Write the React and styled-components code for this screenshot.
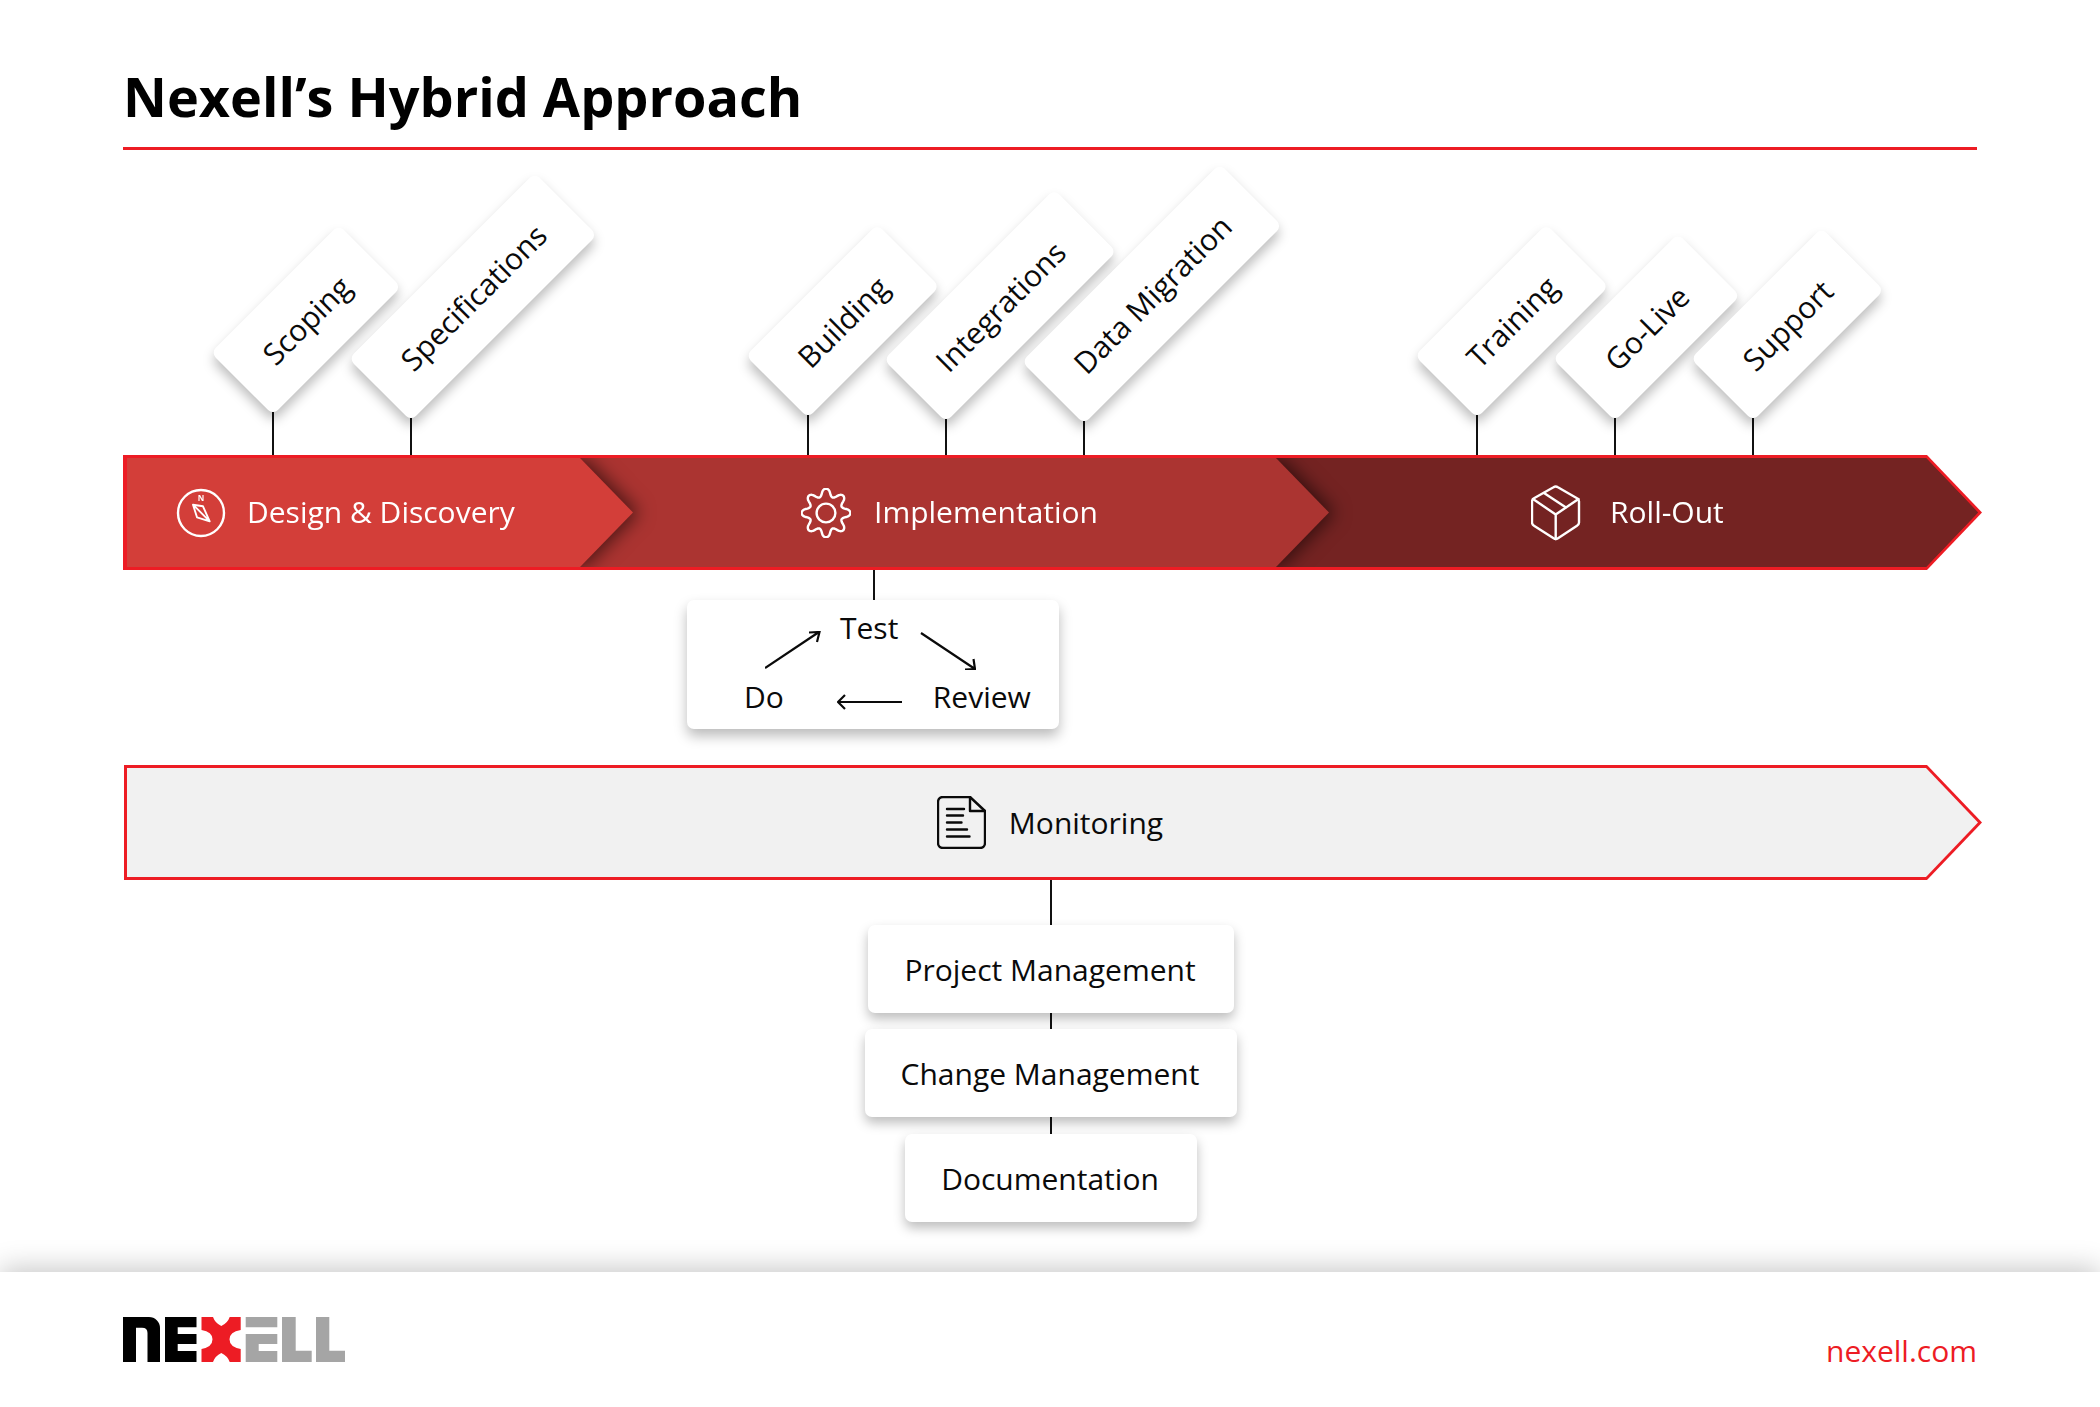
import React from 'react';
import styled, { createGlobalStyle } from 'styled-components';

const GlobalStyle = createGlobalStyle`
  html, body {
    margin: 0;
    padding: 0;
    background: #fff;
  }
  body {
    font-family: "Open Sans", "Liberation Sans", sans-serif;
    color: #0a0a0a;
  }
`;

const Page = styled.div`
  display: flex;
  flex-direction: column;
  width: 2100px;
  height: 1407px;
  overflow: hidden;
`;

const Main = styled.main`
  flex: 1;
  display: flex;
  flex-direction: column;
  padding: 59px 123px 0;
  min-height: 0;
`;

const Title = styled.h1`
  margin: 0;
  font-size: 54px;
  line-height: 74px;
  font-weight: 700;
  color: #000;
  padding-bottom: 14px;
  border-bottom: 3px solid #ed1c24;
`;

const TagRail = styled.div`
  display: flex;
  align-items: flex-end;
  height: 305px;
  padding-left: 149px;
`;

const TagGroup = styled.div`
  display: flex;
  align-items: flex-end;
  gap: 136px;
  margin-left: ${p => p.$offset || 0}px;
`;

const TagStem = styled.div`
  position: relative;
  width: 2px;
  height: ${p => p.$height}px;
  background: #111;
`;

const TagCard = styled.div`
  position: absolute;
  left: 1px;
  bottom: calc(100% - 3px);
  display: flex;
  align-items: center;
  height: 88px;
  padding: 0 36px;
  background: #fff;
  border-radius: 7px;
  font-size: 30px;
  white-space: nowrap;
  transform-origin: 0 100%;
  transform: rotate(-45deg);
  box-shadow: -5px 5px 12px rgba(0, 0, 0, 0.26);
`;

const RibbonOuter = styled.div`
  height: 115px;
  margin: 0 -5px 0 ${p => p.$inset || 0}px;
  padding: 3px 3px 3px ${p => (p.$inset ? 3 : 4)}px;
  box-sizing: border-box;
  background: #ed1c24;
  clip-path: polygon(0 0, calc(100% - 55px) 0, 100% 50%, calc(100% - 55px) 100%, 0 100%);
`;

const RibbonInner = styled.div`
  display: flex;
  height: 100%;
  background: ${p => p.$bg || '#741f1f'};
  clip-path: polygon(0 0, calc(100% - 53px) 0, calc(100% - 1px) 50%, calc(100% - 53px) 100%, 0 100%);
`;

const Segment = styled.div`
  position: relative;
  z-index: ${p => p.$z};
  flex: ${p => (p.$width ? `0 0 ${p.$width}px` : '1')};
  margin-left: ${p => p.$overlap || 0}px;
  filter: drop-shadow(6px 0 9px rgba(0, 0, 0, 0.55));
`;

const SegmentFill = styled.div`
  display: flex;
  align-items: center;
  gap: ${p => p.$gap}px;
  height: 100%;
  padding-left: ${p => p.$pad}px;
  background: ${p => p.$color};
  color: #fff;
  font-size: 30px;
  clip-path: ${p =>
    p.$last
      ? 'none'
      : 'polygon(0 0, calc(100% - 53px) 0, 100% 50%, calc(100% - 53px) 100%, 0 100%)'};
`;

const SegmentLabel = styled.span`
  position: relative;
  top: -1px;
  white-space: nowrap;
`;

const ProcessColumn = styled.div`
  display: flex;
  flex-direction: column;
  align-items: center;
  width: 372px;
  margin-left: 564px;
`;

const VStem = styled.div`
  width: 2px;
  height: ${p => p.$height}px;
  margin-left: ${p => p.$shift || 0}px;
  background: #111;
`;

const ProcessCard = styled.div`
  box-sizing: border-box;
  width: 372px;
  height: 129px;
  padding-top: 8px;
  background: #fff;
  border-radius: 7px;
  font-size: 30px;
  line-height: 40px;
  box-shadow: 0 7px 13px rgba(0, 0, 0, 0.27);
`;

const ProcessRow = styled.div`
  display: flex;
  align-items: flex-start;
  height: ${p => p.$height}px;
  padding-left: ${p => p.$pad}px;
`;

const ProcessWord = styled.span`
  margin-left: ${p => p.$left || 0}px;
`;

const ArrowIcon = styled.svg`
  flex: none;
  margin-left: ${p => p.$left || 0}px;
  margin-top: ${p => p.$top || 0}px;
  fill: none;
  stroke: #0a0a0a;
  stroke-width: 2.2;
`;

const MonitoringContent = styled.div`
  display: flex;
  align-items: center;
  justify-content: center;
  gap: 23px;
  flex: 1;
  padding-right: 6px;
  font-size: 30px;
  background: #f1f1f1;
`;

const MonitoringSpacer = styled.div`
  height: 36px;
`;

const Stack = styled.div`
  display: flex;
  flex-direction: column;
  align-items: center;
  padding-left: 2px;
`;

const StackCard = styled.div`
  position: relative;
  display: flex;
  align-items: center;
  height: 88px;
  padding: 0 38px 0 36px;
  background: #fff;
  border-radius: 7px;
  font-size: 30px;
  white-space: nowrap;
  box-shadow: 0 6px 12px rgba(0, 0, 0, 0.26);
`;

const Footer = styled.footer`
  position: relative;
  display: flex;
  justify-content: space-between;
  align-items: flex-start;
  flex: none;
  height: 135px;
  padding: 45px 123px 0;
  box-sizing: border-box;
  background: #fff;
  box-shadow: 0 -4px 26px rgba(0, 0, 0, 0.22);
`;

const SiteLink = styled.span`
  margin-top: 14px;
  font-size: 30px;
  line-height: 40px;
  color: #ed1c24;
`;

const LineIcon = styled.svg`
  display: block;
  flex: none;
  fill: none;
  stroke: ${p => p.$stroke || '#fff'};
  stroke-width: ${p => p.$weight || 2.4}px;
  stroke-linejoin: round;
  stroke-linecap: round;
`;

const gearPath = () => {
  const points = [];
  for (let i = 0; i < 160; i++) {
    const a = (i / 160) * Math.PI * 2 - Math.PI / 2;
    const wave = Math.cos(8 * (a + Math.PI / 2));
    const r = 20.6 + 3.8 * Math.sign(wave) * Math.pow(Math.abs(wave), 0.75);
    points.push(`${(25 + r * Math.cos(a)).toFixed(2)} ${(25 + r * Math.sin(a)).toFixed(2)}`);
  }
  return `M${points.join('L')}Z`;
};

const CompassIcon = () => (
  <LineIcon width="50" height="50" viewBox="-1 -1 50 50">
    <circle cx="24" cy="24" r="23" />
    <path d="M16 15.7 26 17.3 32.7 32.3 20 28.3Z M16 15.7 32.7 32.3" strokeWidth="1.9" />
    <text x="24" y="11.5" textAnchor="middle" fontSize="8" fontWeight="700" fill="#fff" stroke="none">N</text>
  </LineIcon>
);

const GearIcon = () => (
  <LineIcon width="50" height="50" viewBox="0 0 50 50">
    <path d={gearPath()} />
    <circle cx="25" cy="25" r="9.4" />
  </LineIcon>
);

const BoxIcon = () => (
  <LineIcon width="50" height="56" viewBox="-1 -1 50 56">
    <path d="M21.5 1.2a4 4 0 0 1 4.4 0L45 12.2a4 4 0 0 1 2 3.2V36.6a4 4 0 0 1-2 3.2L26 52.2a4 4 0 0 1-4.4 0L2 39.8a4 4 0 0 1-2-3.2V15.4a4 4 0 0 1 2-3.2Z" />
    <path d="M1 13 23.7 28.5 46.5 13M23.7 28.5V53M12 7 34 21.5" />
  </LineIcon>
);

const DocIcon = () => (
  <LineIcon width="49" height="53" viewBox="-1 -1 49 53" $stroke="#0a0a0a" $weight={2.4}>
    <path d="M5 0H32L47 14V46a5 5 0 0 1-5 5H5a5 5 0 0 1-5-5V5a5 5 0 0 1 5-5Z" />
    <path d="M32 0V14H47" />
    <path d="M9 12H26M9 18.500H25M9 25.500H23.500M9 32.500H29M9 39.500H31.500" />
  </LineIcon>
);

const NexellLogo = () => (
  <svg width="223" height="45" viewBox="0 0 223 45" style={{ display: 'block', flex: 'none' }}>
    <path
      fill="#000"
      d="M0 0H26A11 11 0 0 1 37 11V45H24.500V16Q24.500 10.700 19 10.700H13V45H0Z"
    />
    <path
      fill="#000"
      d="M42 0H73.500V10.300H54.700V17H73.500V27H54.700V34H73.500V45H42Z"
    />
    <path
      fill="#ed1c24"
      d="M78.500 0H90Q92 6 98.300 9Q104.700 6 106.700 0H117.700V13Q106.500 15 106.500 22.300Q106.500 30 117.700 32V45H106.700Q104.700 39 98.300 36Q92 39 90 45H78.500V32Q89.500 30 89.500 22.300Q89.500 15 78.500 13Z"
    />
    <path
      fill="#a5a5a5"
      d="M122.700 0H154.300V10.300H122.700ZM122.700 17H154.300V27H135.700V34H154.300V45H122.700Z"
    />
    <path fill="#a5a5a5" d="M159 0H172.700V33.700H188.700V45H159Z" />
    <path fill="#a5a5a5" d="M193 0H206.300V33.700H222V45H193Z" />
  </svg>
);

const tagGroups = [
  {
    offset: 0,
    tags: [
      { label: 'Scoping', stem: 43 },
      { label: 'Specifications', stem: 37 },
    ],
  },
  {
    offset: 395,
    tags: [
      { label: 'Building', stem: 40 },
      { label: 'Integrations', stem: 36 },
      { label: 'Data Migration', stem: 34 },
    ],
  },
  {
    offset: 391,
    tags: [
      { label: 'Training', stem: 40 },
      { label: 'Go-Live', stem: 37 },
      { label: 'Support', stem: 37 },
    ],
  },
];

const stackItems = [
  { label: 'Project Management', stem: 45 },
  { label: 'Change Management', stem: 16 },
  { label: 'Documentation', stem: 17 },
];

const App = () => (
  <Page>
    <GlobalStyle />
    <Main>
      <Title>Nexell’s Hybrid Approach</Title>

      <TagRail>
        {tagGroups.map(group => (
          <TagGroup key={group.tags[0].label} $offset={group.offset}>
            {group.tags.map(tag => (
              <TagStem key={tag.label} $height={tag.stem}>
                <TagCard>{tag.label}</TagCard>
              </TagStem>
            ))}
          </TagGroup>
        ))}
      </TagRail>

      <RibbonOuter>
        <RibbonInner>
          <Segment $z={3} $width={506}>
            <SegmentFill $color="#d33e39" $pad={49} $gap={21}>
              <CompassIcon />
              <SegmentLabel>Design &amp; Discovery</SegmentLabel>
            </SegmentFill>
          </Segment>
          <Segment $z={2} $width={749} $overlap={-53}>
            <SegmentFill $color="#ab3431" $pad={221} $gap={23}>
              <GearIcon />
              <SegmentLabel>Implementation</SegmentLabel>
            </SegmentFill>
          </Segment>
          <Segment $z={1} $overlap={-52}>
            <SegmentFill $color="#742322" $pad={254} $gap={29} $last>
              <BoxIcon />
              <SegmentLabel>Roll-Out</SegmentLabel>
            </SegmentFill>
          </Segment>
        </RibbonInner>
      </RibbonOuter>

      <ProcessColumn>
        <VStem $height={30} $shift={2} />
        <ProcessCard>
          <ProcessRow $height={69} $pad={78}>
            <ArrowIcon width="56" height="38" viewBox="0 0 56 38" $top={23}>
              <path d="M0 37 54 1M44 1.500 54.500 1 52 11" />
            </ArrowIcon>
            <ProcessWord $left={19}>Test</ProcessWord>
            <ArrowIcon width="56" height="38" viewBox="0 0 56 38" $left={22} $top={24}>
              <path d="M1 1 55 37M53.500 27 55 37 45 37.500" />
            </ArrowIcon>
          </ProcessRow>
          <ProcessRow $height={40} $pad={57}>
            <ProcessWord>Do</ProcessWord>
            <ArrowIcon width="65" height="16" viewBox="0 0 65 16" $left={53} $top={17}>
              <path d="M65 8H1M8 1 1 8 8 15" />
            </ArrowIcon>
            <ProcessWord $left={31}>Review</ProcessWord>
          </ProcessRow>
        </ProcessCard>
      </ProcessColumn>

      <MonitoringSpacer />

      <RibbonOuter $inset={1}>
        <RibbonInner $bg="#f1f1f1">
          <MonitoringContent>
            <DocIcon />
            <span>Monitoring</span>
          </MonitoringContent>
        </RibbonInner>
      </RibbonOuter>

      <Stack>
        {stackItems.map(item => (
          <React.Fragment key={item.label}>
            <VStem $height={item.stem} />
            <StackCard>{item.label}</StackCard>
          </React.Fragment>
        ))}
      </Stack>
    </Main>

    <Footer>
      <NexellLogo />
      <SiteLink>nexell.com</SiteLink>
    </Footer>
  </Page>
);

export default App;
